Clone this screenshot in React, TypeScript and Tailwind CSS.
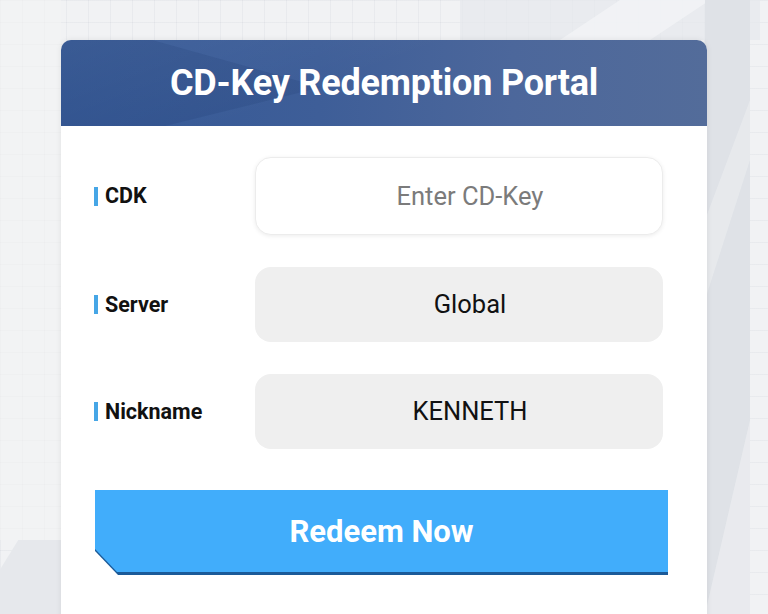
import React from "react";

function Label({ text }: { text: string }) {
  return (
    <div className="flex w-[161px] items-center gap-[7px]">
      <span className="h-[19px] w-[4px] bg-[#46a6e6]" />
      <span className="text-[21.5px] font-bold leading-none text-[#111] [font-family:Roboto,sans-serif]">
        {text}
      </span>
    </div>
  );
}

export default function App() {
  return (
    <div className="relative h-[614px] w-[768px] overflow-hidden bg-[#f1f2f4] bg-[linear-gradient(to_right,rgba(120,130,150,0.07)_1px,transparent_1px),linear-gradient(to_bottom,rgba(120,130,150,0.07)_1px,transparent_1px)] bg-[size:22px_22px]">
      {/* decorative background shapes */}
      <div className="absolute left-[460px] top-0 h-[40px] w-[300px] bg-[#e6e8ec] opacity-70" />
      <div className="absolute left-[560px] top-0 h-[40px] w-[150px] bg-[#f3f4f6] [clip-path:polygon(40%_0,100%_0,60%_100%,0_100%)] opacity-80" />
      <div className="absolute left-[705px] top-0 h-[614px] w-[45px] bg-[#dfe2e7]" />
      <div className="absolute left-[705px] top-[100px] h-[200px] w-[45px] bg-[#e9ebee] [clip-path:polygon(100%_0,100%_30%,0_100%,0_60%)] opacity-80" />
      <div className="absolute left-[705px] top-[420px] h-[194px] w-[45px] bg-[#eceef1] [clip-path:polygon(100%_0,100%_100%,0_100%)] opacity-70" />
      <div className="absolute left-0 top-[540px] h-[74px] w-[61px] bg-[#e6e8ec] [clip-path:polygon(30%_0,100%_0,100%_100%,0_100%,0_40%)]" />
      <div className="absolute left-0 top-0 h-[540px] w-[61px] bg-[#f3f3f3] opacity-60" />

      <div className="relative ml-[61px] mt-[40px] w-[646px] overflow-hidden rounded-t-[10px] bg-white shadow-[0_0_6px_rgba(0,0,0,0.08)]">
        {/* header */}
        <div className="relative flex h-[86px] items-center justify-center overflow-hidden bg-[linear-gradient(90deg,#345896_0%,#3e5e98_40%,#4c679b_70%,#536c9a_100%)]">
          <div className="absolute inset-0 bg-[linear-gradient(160deg,rgba(255,255,255,0.06)_0%,rgba(255,255,255,0)_45%)]" />
          <div className="absolute left-0 top-0 h-full w-[260px] bg-[rgba(20,40,90,0.12)] [clip-path:polygon(0_0,35%_0,100%_55%,40%_100%,0_100%)]" />
          <h1 className="relative text-[36px] font-bold tracking-[-0.2px] text-white [font-family:Roboto,sans-serif]">
            CD-Key Redemption Portal
          </h1>
        </div>

        {/* body */}
        <div className="flex flex-col pb-[60px] pl-[33px] pr-[44px] pt-[31px]">
          <div className="flex flex-col gap-[32px]">
            <div className="flex items-center">
              <Label text="CDK" />
              <div className="flex h-[78px] w-[408px] items-center justify-center rounded-[16px] border border-[#ececec] bg-white pl-[22px] shadow-[0_1px_4px_rgba(0,0,0,0.08)]">
                <span className="text-[25.5px] text-[#7b7b7b] [font-family:Roboto,sans-serif]">Enter CD-Key</span>
              </div>
            </div>
            <div className="flex items-center">
              <Label text="Server" />
              <div className="flex h-[75px] w-[408px] items-center justify-center rounded-[16px] bg-[#efefef] pl-[22px]">
                <span className="text-[25.5px] text-[#111] [font-family:Roboto,sans-serif]">Global</span>
              </div>
            </div>
            <div className="flex items-center">
              <Label text="Nickname" />
              <div className="flex h-[75px] w-[408px] items-center justify-center rounded-[16px] bg-[#efefef] pl-[22px]">
                <span className="text-[25.5px] text-[#111] [font-family:Roboto,sans-serif]">KENNETH</span>
              </div>
            </div>
          </div>

          <div className="ml-[1px] mt-[41px] h-[85px] w-[573px] bg-[#1b5a98] [clip-path:polygon(0_0,100%_0,100%_100%,23px_100%,0_61px)]">
            <div className="flex h-[82px] w-full items-center justify-center bg-[#41adfb] [clip-path:polygon(0_0,100%_0,100%_100%,22px_100%,0_59px)]">
              <span className="mt-[2px] text-[31px] font-bold text-white [font-family:Roboto,sans-serif]">Redeem Now</span>
            </div>
          </div>
        </div>
      </div>
    </div>
  );
}
